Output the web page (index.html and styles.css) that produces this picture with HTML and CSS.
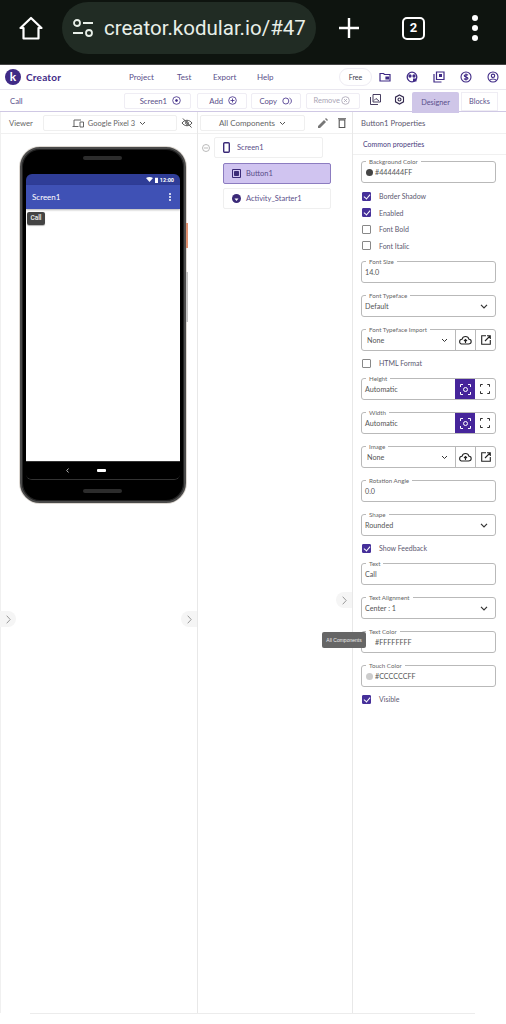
FILE: index.html
```html
<!DOCTYPE html>
<html lang="en">
<head>
  <meta charset="UTF-8" />
  <meta name="viewport" content="width=device-width, initial-scale=1.0" />
  <title>Kodular Creator</title>
  <link rel="stylesheet" href="styles.css">
</head>
<body>
  <div class="browser">
    <svg class="b-home" width="26" height="26" viewBox="0 0 26 26" fill="none" stroke="#fff" stroke-width="2.2" stroke-linejoin="round"><path d="M2.5 13 13 3l10.500 10h-3v10.500h-15V13z"/></svg>
    <div class="urlbar">
      <svg width="22" height="20" viewBox="0 0 22 20" fill="none" stroke="#e8efe8" stroke-width="1.800"><circle cx="5" cy="5" r="3"/><path d="M11 5h10M1 15h10"/><circle cx="17" cy="15" r="3"/></svg>
      <span>creator.kodular.io/#47</span>
    </div>
    <svg class="b-plus" width="24" height="24" viewBox="0 0 24 24" stroke="#fff" stroke-width="2.400"><path d="M12 2v20M2 12h20"/></svg>
    <div class="tabs">2</div>
    <div class="dots"><i></i><i></i><i></i></div>
  </div>

  <div class="nav">
    <div class="logo">k</div>
    <div class="brand">Creator</div>
    <div class="menu"><span>Project</span><span>Test</span><span>Export</span><span>Help</span></div>
    <div class="free">Free</div>
    <div class="nav-icons">
      <svg width="12" height="12" viewBox="0 0 12 12" fill="none" stroke="#3f2a86" stroke-width="1.200"><path d="M1 2.500h3.500l1 1H11v6.500H1z"/><path d="M7 6h2.500v2H7z" fill="#3f2a86"/></svg>
      <svg width="12" height="12" viewBox="0 0 12 12" fill="none" stroke="#3f2a86" stroke-width="1.300"><circle cx="6" cy="6" r="4.800"/><circle cx="4" cy="5" r="1" fill="#3f2a86"/><circle cx="8" cy="5" r="1" fill="#3f2a86"/><path d="M7 7.500h3.500v3H7z" fill="#3f2a86" stroke="none"/></svg>
      <svg width="12" height="12" viewBox="0 0 12 12" fill="none" stroke="#3f2a86" stroke-width="1.200"><path d="M3.500 1H11v7.500H3.500zM1 3v8h7.500"/><path d="M6 3h3v3H6z" fill="#3f2a86" stroke="none"/></svg>
      <svg width="12" height="12" viewBox="0 0 12 12" fill="none" stroke="#3f2a86" stroke-width="1.100"><circle cx="6" cy="6" r="5"/><path d="M8 4.300C7.500 3.500 4.200 3.300 4.200 4.700 4.200 6.200 8 5.700 8 7.300 8 8.700 4.600 8.500 4 7.700M6 2.500v7"/></svg>
      <svg width="12" height="12" viewBox="0 0 12 12" fill="none" stroke="#3f2a86" stroke-width="1.100"><circle cx="6" cy="6" r="5"/><circle cx="6" cy="4.800" r="1.700"/><path d="M2.800 9.200C4 7.500 8 7.500 9.200 9.200"/></svg>
    </div>
  </div>

  <div class="toolbar">
    <div class="tb-title">Call</div>
    <div class="tb-btn w-screen">Screen1 <svg width="9" height="9" viewBox="0 0 9 9" fill="none" stroke="#3f2a86" stroke-width=".8"><circle cx="4.500" cy="4.500" r="3.800"/><circle cx="4.500" cy="4.500" r="1" fill="#3f2a86"/></svg></div>
    <div class="tb-btn w-add">Add <svg width="9" height="9" viewBox="0 0 9 9" fill="none" stroke="#3f2a86" stroke-width=".8"><circle cx="4.500" cy="4.500" r="3.800"/><path d="M4.500 2.500v4M2.500 4.500h4"/></svg></div>
    <div class="tb-btn w-copy">Copy <svg width="11" height="8" viewBox="0 0 11 8" fill="none" stroke="#3f2a86" stroke-width=".8"><circle cx="3.800" cy="4" r="3"/><path d="M7.500 1c2.500 1 2.500 5 0 6"/></svg></div>
    <div class="tb-btn w-remove">Remove <svg width="9" height="9" viewBox="0 0 9 9" fill="none" stroke="#a9a5b5" stroke-width=".8"><circle cx="4.500" cy="4.500" r="3.800"/><path d="M3 3l3 3M6 3l-3 3"/></svg></div>
    <svg class="tb-icon" width="11" height="11" viewBox="0 0 11 11" fill="none" stroke="#33294f" stroke-width=".9"><path d="M3 .5h7.500V8H3zM.5 3v7.500H8"/><path d="M4 6.500 6 4.500l3 2.500" /></svg>
    <svg class="tb-icon" width="11" height="11" viewBox="0 0 11 11" fill="none" stroke="#33294f" stroke-width="1.100"><path d="M5.500 1 9.500 3.200v4.600L5.500 10 1.500 7.800V3.200z"/><circle cx="5.500" cy="5.500" r="1.500"/></svg>
    <div class="tab on">Designer</div>
    <div class="tab">Blocks</div>
  </div>

  <div class="main">
    <div class="col-viewer">
      <div class="col-head">
        <span class="label">Viewer</span>
        <div class="select device">
          <svg width="12" height="9" viewBox="0 0 12 9" fill="none" stroke="#555" stroke-width=".9"><path d="M2 7V1h7M.5 7.500h6M8 3h3.500v5H8z"/></svg>
          Google Pixel 3
          <svg width="7" height="5" viewBox="0 0 7 5" fill="none" stroke="#555"><path d="m1 1 2.500 2.500L6 1"/></svg>
        </div>
        <svg class="eye" width="12" height="10" viewBox="0 0 13 11" fill="none" stroke="#555" stroke-width="1.100"><path d="M1 5.500C4 1.500 9 1.500 12 5.500 9 9.500 4 9.500 1 5.500z"/><circle cx="6.500" cy="5.500" r="1.500"/><path d="M2 .5l9.500 10"/></svg>
      </div>
      <div class="stage">
        <div class="phone">
          <div class="speaker"></div>
          <div class="screen">
            <div class="status">
              <svg width="7" height="5" viewBox="0 0 7 5" fill="#fff"><path d="M0 1q3.500-2 7 0L3.500 5z"/></svg>
              <svg width="3" height="6" viewBox="0 0 3 6" fill="#fff"><path d="M0 .7h3V6H0z"/></svg>
              <span>12:00</span>
            </div>
            <div class="appbar">
              <span>Screen1</span>
              <div class="appdots"><i></i><i></i><i></i></div>
            </div>
            <div class="canvas">
              <div class="call">Call</div>
            </div>
            <div class="softnav">
              <svg width="3" height="5" viewBox="0 0 3 5" fill="none" stroke="#bbb"><path d="M2.500.5.700 2.500l1.800 2"/></svg>
              <i class="homepill"></i>
            </div>
          </div>
          <div class="speaker low"></div>
          <div class="side power"></div>
          <div class="side volume"></div>
        </div>
      </div>
      <div class="edge left"><svg width="5" height="9" viewBox="0 0 5 9" fill="none" stroke="#999"><path d="m.7.7 3.500 3.800L.7 8.300"/></svg></div>
      <div class="edge right"><svg width="5" height="9" viewBox="0 0 5 9" fill="none" stroke="#999"><path d="m.7.7 3.500 3.800L.7 8.300"/></svg></div>
    </div>

    <div class="col-tree">
      <div class="col-head">
        <div class="select comps">All Components
          <svg width="7" height="5" viewBox="0 0 7 5" fill="none" stroke="#555"><path d="m1 1 2.500 2.500L6 1"/></svg>
        </div>
        <svg class="pen" width="10" height="10" viewBox="0 0 10 10" fill="#777"><path d="M0 10V8l6-6 2 2-6 6zM7 1l1-1 2 2-1 1z"/></svg>
        <svg class="bin" width="8" height="10" viewBox="0 0 8 10" fill="none" stroke="#555" stroke-width="1.100"><path d="M1.200 2h5.600v7.500H1.200zM0 .7h8"/></svg>
      </div>
      <div class="tree">
        <div class="tree-root">
          <svg class="collapse" width="8" height="8" viewBox="0 0 8 8" fill="none" stroke="#aaa" stroke-width=".8"><circle cx="4" cy="4" r="3.500"/><path d="M2 4h4"/></svg>
          <div class="node">
            <svg width="7" height="11" viewBox="0 0 7 11" fill="none" stroke="#3b2a78" stroke-width="1.400"><rect x=".7" y=".7" width="5.600" height="9.600" rx="1"/></svg>
            Screen1
          </div>
        </div>
        <div class="node child sel">
          <svg width="9" height="9" viewBox="0 0 9 9" fill="none" stroke="#3b2a78"><path d="M.5.500h8v8h-8z"/><path d="M2.500 2.500h4v4h-4z" fill="#3b2a78"/></svg>
          Button1
        </div>
        <div class="node child">
          <svg width="9" height="9" viewBox="0 0 9 9"><circle cx="4.500" cy="4.500" r="4.500" fill="#3b2a78"/><path d="M4.500 7 2.500 4.500h4z" fill="#fff"/></svg>
          Activity_Starter1
        </div>
      </div>
      <div class="edge mid"><svg width="5" height="9" viewBox="0 0 5 9" fill="none" stroke="#999"><path d="m.7.7 3.500 3.800L.7 8.300"/></svg></div>
    </div>

    <div class="col-props">
      <div class="col-head props-head">Button1 Properties</div>
      <div class="common">Common properties</div>
      <div class="props">
        <fieldset class="field"><legend>Background Color</legend><i class="swatch dark"></i><span>#444444FF</span></fieldset>
        <div class="checks first">
          <label class="check"><i class="box on"></i>Border Shadow</label>
          <label class="check"><i class="box on"></i>Enabled</label>
          <label class="check"><i class="box"></i>Font Bold</label>
          <label class="check"><i class="box"></i>Font Italic</label>
        </div>
        <fieldset class="field"><legend>Font Size</legend><span>14.0</span></fieldset>
        <fieldset class="field"><legend>Font Typeface</legend><span>Default</span><svg class="chev" width="8" height="5" viewBox="0 0 8 5" fill="none" stroke="#333" stroke-width="1.200"><path d="m1 .8 3 3 3-3"/></svg></fieldset>
        <fieldset class="field split"><legend>Font Typeface Import</legend><span class="indent">None</span><svg class="chev small" width="7" height="5" viewBox="0 0 7 5" fill="none" stroke="#333"><path d="m1 1 2.500 2.500L6 1"/></svg>
          <div class="cell"><svg width="13" height="10" viewBox="0 0 13 10" fill="none" stroke="#222" stroke-width="1.100"><path d="M3.500 9C-.5 9 0 4.500 3 4.300 4 .5 9 .5 10 4.300c3 .2 3 4.700-.5 4.700z"/><path d="M6.500 8V4.500M5 6l1.500-1.500L8 6"/></svg></div>
          <div class="cell"><svg width="10" height="10" viewBox="0 0 10 10" fill="none" stroke="#222" stroke-width="1.100"><path d="M5 .7H.7v8.600h8.600V5M4 6 9 1M6 .7h3.300V4"/></svg></div>
        </fieldset>
        <div class="checks inline">
          <label class="check"><i class="box"></i>HTML Format</label>
        </div>
        <fieldset class="field split"><legend>Height</legend><span>Automatic</span>
          <div class="cell active"><svg width="11" height="11" viewBox="0 0 11 11" fill="none" stroke="#fff"><path d="M.5 3V.5H3M8 .5h2.500V3M.5 8v2.500H3M8 10.500h2.500V8"/><circle cx="5.500" cy="5.500" r="2"/></svg></div>
          <div class="cell plain"><svg width="10" height="10" viewBox="0 0 11 11" fill="none" stroke="#222" stroke-width="1.100"><path d="M.5 3v-2.500H3M8 .5h2.500V3M.5 8v2.500H3M8 10.500h2.500V8"/></svg></div>
        </fieldset>
        <fieldset class="field split"><legend>Width</legend><span>Automatic</span>
          <div class="cell active"><svg width="11" height="11" viewBox="0 0 11 11" fill="none" stroke="#fff"><path d="M.5 3V.5H3M8 .5h2.500V3M.5 8v2.500H3M8 10.500h2.500V8"/><circle cx="5.500" cy="5.500" r="2"/></svg></div>
          <div class="cell plain"><svg width="10" height="10" viewBox="0 0 11 11" fill="none" stroke="#222" stroke-width="1.100"><path d="M.5 3v-2.500H3M8 .5h2.500V3M.5 8v2.500H3M8 10.500h2.500V8"/></svg></div>
        </fieldset>
        <fieldset class="field split"><legend>Image</legend><span class="indent">None</span><svg class="chev small" width="7" height="5" viewBox="0 0 7 5" fill="none" stroke="#333"><path d="m1 1 2.500 2.500L6 1"/></svg>
          <div class="cell"><svg width="13" height="10" viewBox="0 0 13 10" fill="none" stroke="#222" stroke-width="1.100"><path d="M3.500 9C-.5 9 0 4.500 3 4.300 4 .5 9 .5 10 4.300c3 .2 3 4.700-.5 4.700z"/><path d="M6.500 8V4.500M5 6l1.500-1.500L8 6"/></svg></div>
          <div class="cell"><svg width="10" height="10" viewBox="0 0 10 10" fill="none" stroke="#222" stroke-width="1.100"><path d="M5 .7H.7v8.600h8.600V5M4 6 9 1M6 .7h3.300V4"/></svg></div>
        </fieldset>
        <fieldset class="field"><legend>Rotation Angle</legend><span>0.0</span></fieldset>
        <fieldset class="field"><legend>Shape</legend><span>Rounded</span><svg class="chev" width="8" height="5" viewBox="0 0 8 5" fill="none" stroke="#333" stroke-width="1.200"><path d="m1 .8 3 3 3-3"/></svg></fieldset>
        <div class="checks inline">
          <label class="check"><i class="box on"></i>Show Feedback</label>
        </div>
        <fieldset class="field"><legend>Text</legend><span>Call</span></fieldset>
        <fieldset class="field"><legend>Text Alignment</legend><span>Center : 1</span><svg class="chev" width="8" height="5" viewBox="0 0 8 5" fill="none" stroke="#333" stroke-width="1.200"><path d="m1 .8 3 3 3-3"/></svg></fieldset>
        <fieldset class="field"><legend>Text Color</legend><i class="swatch white"></i><span>#FFFFFFFF</span></fieldset>
        <fieldset class="field"><legend>Touch Color</legend><i class="swatch grey"></i><span>#CCCCCCFF</span></fieldset>
        <div class="checks inline">
          <label class="check"><i class="box on"></i>Visible</label>
        </div>
      </div>
    </div>
    <div class="tooltip">All Components</div>
  </div>
  <div class="foot-line"></div>
</body>
</html>
```

FILE: styles.css
```css
* {
  box-sizing: border-box;
}
html, body {
  margin: 0;
  padding: 0;
  overflow: hidden;
  height: 1024px;
  background: #fff;
  font-family: "Lato", "Open Sans", sans-serif;
  color: #3c3a4a;
}
svg {
  display: block;
  flex: none;
}

/* browser chrome */
.browser {
  height: 65px;
  background: #0e140f;
  display: flex;
  align-items: center;
  padding: 0 0 8px 18px;
  border-bottom: 1px solid #444;
}
.urlbar {
  margin-left: 18px;
  width: 254px;
  height: 52px;
  border-radius: 26px;
  background: #212c24;
  display: flex;
  align-items: center;
  gap: 10px;
  padding-left: 10px;
  color: #e8efe8;
  font-family: "Roboto", sans-serif;
  font-size: 20.500px;
  white-space: nowrap;
}
.b-plus {
  margin-left: 21px;
}
.tabs {
  margin-left: 41px;
  width: 23px;
  height: 23px;
  border: 2.500px solid #fff;
  border-radius: 5px;
  color: #fff;
  font: bold 13px "Roboto", sans-serif;
  text-align: center;
  line-height: 18px;
}
.dots {
  margin-left: 47px;
  display: flex;
  flex-direction: column;
  gap: 4px;
}
.dots i {
  width: 6px;
  height: 6px;
  border-radius: 50%;
  background: #fff;
}

/* top nav */
.nav {
  height: 25px;
  display: flex;
  align-items: center;
  padding-left: 5px;
  border-bottom: 1px solid #e9e7ef;
  font-size: 8px;
}
.logo {
  width: 16px;
  height: 16px;
  border-radius: 50%;
  background: #3f2a86;
  color: #fff;
  font: bold 12px/15px "Lato", sans-serif;
  text-align: center;
}
.brand {
  margin-left: 5px;
  font-size: 10px;
  font-weight: bold;
  color: #3f2a86;
  letter-spacing: .2px;
  width: 48px;
}
.menu {
  margin-left: 55px;
  display: flex;
  color: #5a4f8a;
  width: 210px;
}
.menu span:nth-child(1) { width: 48px; }
.menu span:nth-child(2) { width: 36px; }
.menu span:nth-child(3) { width: 44px; }
.free {
  width: 33px;
  height: 18px;
  border: 1px solid #eeecf3;
  border-radius: 9px;
  font-size: 7px;
  text-align: center;
  line-height: 16px;
}
.nav-icons {
  margin-left: 7px;
  display: flex;
  gap: 15px;
}

/* toolbar */
.toolbar {
  height: 22px;
  display: flex;
  align-items: center;
  padding-left: 10px;
  border-bottom: 1px solid #cfc8e4;
  font-size: 7.700px;
  color: #5a4f8a;
}
.tb-title {
  width: 114px;
}
.tb-btn {
  height: 16px;
  border: 1px solid #efedf4;
  border-radius: 2px;
  display: flex;
  align-items: center;
  justify-content: flex-end;
  gap: 5px;
  padding-right: 9px;
  margin-right: 5px;
}
.w-screen { width: 67px; margin-right: 6px; }
.w-add { width: 50px; padding-right: 9px; margin-right: 4px; }
.w-copy { width: 50px; padding-right: 7px; }
.w-remove { width: 54px; color: #a9a5b5; padding-right: 9px; gap: 1px; font-size: 7.500px; }
.tb-icon {
  margin: 0 0 2px 5px;
}
.tb-icon + .tb-icon {
  margin-left: 13px;
}
.tab {
  height: 19px;
  width: 37px;
  border: 1px solid #efedf4;
  text-align: center;
  line-height: 18px;
  margin-left: 2px;
  margin-top: 1px;
  font-size: 7.300px;
}
.tab.on {
  margin-left: 7px;
  margin-top: 3px;
  height: 21px;
  width: 47px;
  background: #cfc6e8;
  border: 0;
  border-radius: 2px 2px 0 0;
  line-height: 21px;
}

/* main columns */
.main {
  position: relative;
  display: flex;
  height: 901px;
}
.col-viewer {
  position: relative;
  width: 198px;
  border-left: 1px solid #f0f0f0;
  border-right: 1px solid #e8e8e8;
}
.col-tree {
  position: relative;
  width: 155px;
  border-right: 1px solid #e8e8e8;
}
.col-props {
  flex: 1;
}
.col-head {
  height: 22px;
  padding-top: 1px;
  display: flex;
  align-items: center;
  border-bottom: 1px solid #f0f0f0;
  font-size: 7.700px;
  color: #666;
}
.label {
  margin-left: 8px;
  width: 34px;
}
.select {
  height: 16px;
  border: 1px solid #efefef;
  border-radius: 2px;
  display: flex;
  align-items: center;
  justify-content: center;
  gap: 4px;
}
.device {
  width: 134px;
  font-size: 7.500px;
  padding-right: 2px;
}
.eye {
  margin-left: 4px;
}
.comps {
  margin-left: 2px;
  width: 105px;
  font-size: 8px;
}
.pen {
  margin-left: 13px;
}
.bin {
  margin-left: 10px;
}

/* phone mockup */
.stage {
  padding: 13px 0 0 19px;
}
.phone {
  position: relative;
  width: 166px;
  height: 356px;
  background: #000;
  border: 2px solid #4a4a4a;
  border-radius: 20px;
  box-shadow: 0 0 0 1px #ddd8d2, inset 0 0 0 1px #222;
  padding: 25px 4px 0;
}
.speaker {
  position: absolute;
  top: 7px;
  left: 61px;
  width: 39px;
  height: 4px;
  border-radius: 2px;
  background: #2c2c2c;
}
.speaker.low {
  top: auto;
  bottom: 8px;
}
.side {
  position: absolute;
  left: 164px;
  width: 2px;
}
.power {
  top: 74px;
  height: 25px;
  background: #e0906f;
}
.volume {
  top: 123px;
  height: 50px;
  background: #c4c4c4;
}
.screen {
  width: 154px;
  height: 306px;
  border-radius: 6px;
  overflow: hidden;
  border-bottom: 1px solid #333;
  display: flex;
  flex-direction: column;
}
.status {
  height: 11px;
  background: #2f3d97;
  display: flex;
  align-items: center;
  justify-content: flex-end;
  gap: 2px;
  padding-right: 6px;
  color: #fff;
  font: bold 5.500px "Roboto", sans-serif;
}
.appbar {
  height: 24px;
  background: #3f51b5;
  display: flex;
  align-items: center;
  justify-content: space-between;
  padding: 0 9px 0 6px;
  color: #fff;
  font-size: 8px;
  box-shadow: 0 1px 2px rgba(0,0,0,.3);
  position: relative;
}
.appdots {
  display: flex;
  flex-direction: column;
  gap: 1px;
}
.appdots i {
  width: 2px;
  height: 2px;
  background: #fff;
  border-radius: 50%;
}
.canvas {
  flex: 1;
  background: #fff;
  padding: 3px 0 0 1px;
}
.call {
  width: 18px;
  height: 13px;
  background: #444;
  border-radius: 2px;
  color: #eee;
  font: 500 6.500px/13px "Roboto", sans-serif;
  text-align: center;
  box-shadow: 0 1px 1px rgba(0,0,0,.3);
}
.softnav {
  height: 18px;
  background: #000;
  border-top: 1px solid #333;
  display: flex;
  align-items: center;
  padding-left: 40px;
}
.homepill {
  margin-left: 28px;
  width: 9px;
  height: 3px;
  border-radius: 1px;
  background: #fff;
}

.edge {
  position: absolute;
  top: 499px;
  width: 16px;
  height: 16px;
  background: #f5f5f5;
  display: flex;
  align-items: center;
  justify-content: center;
}
.edge.left {
  left: -1px;
  border-radius: 0 8px 8px 0;
}
.edge.right {
  left: 180px;
  border-radius: 8px 0 0 8px;
}
.edge.mid {
  top: 480px;
  left: 138px;
  border-radius: 8px 0 0 8px;
}

/* component tree */
.tree {
  padding: 3px 0 0 4px;
  font-size: 7.500px;
  color: #5a4f8a;
}
.tree-root {
  display: flex;
  align-items: center;
  gap: 4px;
}
.node {
  width: 109px;
  height: 21px;
  border: 1px solid #efefef;
  border-radius: 2px;
  display: flex;
  align-items: center;
  gap: 7px;
  padding-left: 8px;
}
.node.child {
  width: 108px;
  margin: 4px 0 0 21px;
  padding-left: 8px;
  gap: 5px;
}
.node.sel {
  background: #d0c4f0;
  border-color: #8c7cc0;
  margin-top: 5px;
}

/* properties */
.props-head {
  padding-left: 8px;
  color: #5c5870;
}
.common {
  height: 21px;
  padding-left: 10px;
  font-size: 7px;
  line-height: 21px;
  color: #4a3d80;
  border-bottom: 1px solid #f0f0f0;
}
.props {
  padding: 7px 10px 0 8px;
}
.field {
  position: relative;
  margin: -5px 0 13px;
  padding: 0 0 0 3px;
  height: 26px;
  min-width: 0;
  border: 1px solid #b9b9b9;
  border-radius: 3px;
  display: flex;
  align-items: center;
  font-size: 7.200px;
  color: #555;
}
.field legend {
  margin-left: 1px;
  padding: 0 3px;
  font-size: 6.200px;
  line-height: 9px;
  color: #666;
}
.field > span {
  flex: 1;
  padding-bottom: 3px;
}
.field > span.indent {
  padding-left: 2px;
}
.chev {
  margin: 0 7px 3px 0;
}
.split {
  padding-right: 0;
}
.cell {
  align-self: stretch;
  width: 20px;
  margin-top: -4px;
  border-left: 1px solid #b9b9b9;
  display: flex;
  align-items: center;
  justify-content: center;
}
.cell.active {
  background: #46259b;
  border-left: 0;
}
.cell.plain {
  border-left: 0;
}
.swatch {
  width: 7px;
  height: 7px;
  border-radius: 50%;
  margin: 0 2px 3px 1px;
}
.swatch.dark { background: #444; }
.swatch.white { background: #fff; }
.swatch.grey { background: #ccc; }

/* margins collapse with the -5px / 13px on .field */
.checks {
  display: flex;
  flex-direction: column;
  font-size: 7px;
  color: #5c5870;
}
.checks.first {
  margin: -8.250px 0 8.250px;
}
.checks.inline {
  margin: -9.250px 0 7.750px;
}
.check {
  height: 16.500px;
  display: flex;
  align-items: center;
  gap: 8px;
  padding-left: 1px;
}
.box {
  width: 9px;
  height: 9px;
  border: 1px solid #888;
  border-radius: 1px;
  position: relative;
}
.box.on {
  background: #46309a;
  border-color: #46309a;
}
.box.on::after {
  content: "";
  position: absolute;
  left: 2px;
  top: 0;
  width: 3px;
  height: 5px;
  border: solid #fff;
  border-width: 0 1px 1px 0;
  transform: rotate(40deg);
}

.tooltip {
  position: absolute;
  left: 322px;
  top: 520px;
  width: 44px;
  height: 16px;
  background: #666;
  border-radius: 2px;
  color: #eee;
  font: 5px/16px "Liberation Sans", sans-serif;
  text-align: center;
}
.foot-line {
  margin-left: 30px;
  width: 445px;
  height: 1px;
  background: #ececec;
}
```
